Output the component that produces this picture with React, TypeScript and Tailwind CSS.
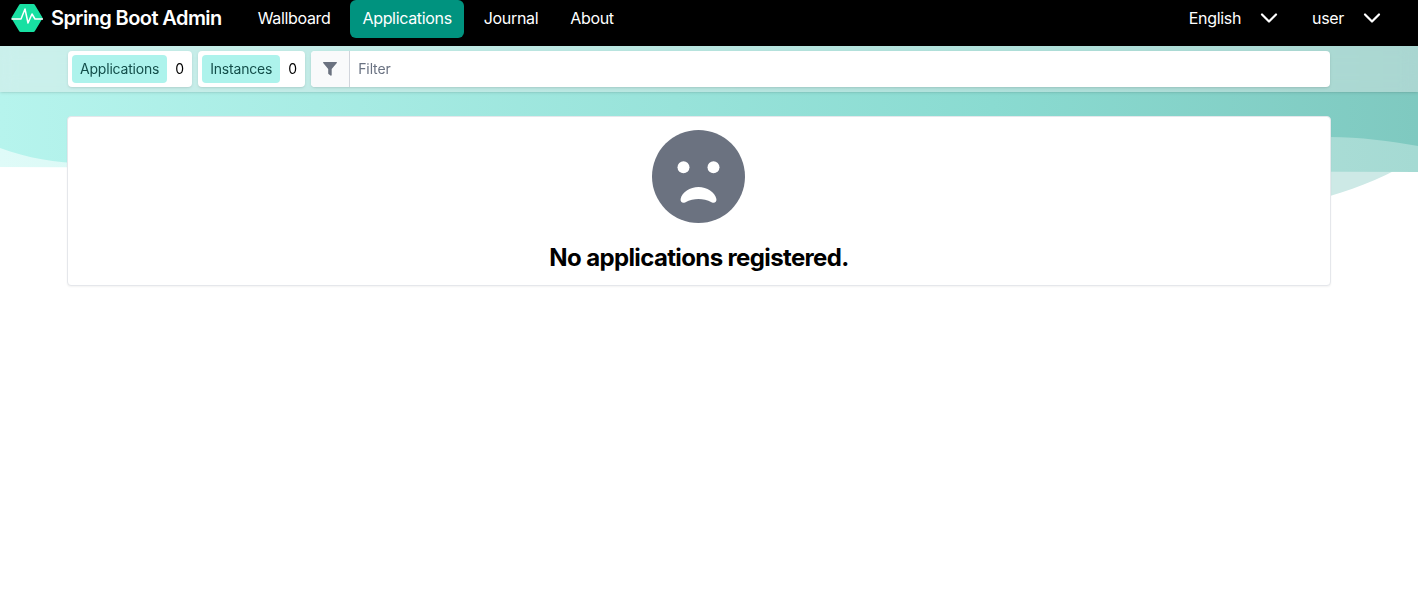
import { ChevronDown } from "lucide-react"

const links = ["Wallboard", "Applications", "Journal", "About"]

function Logo() {
    return (
        <svg viewBox="0 0 32 28" className="w-[32px] h-[28px]" fill="none">
            <path d="M9.5 1.5h13l7.5 12.5-7.5 12.5h-13L2 14z" fill="#18e0a2" stroke="#18e0a2" strokeWidth="3" strokeLinejoin="round" />
            <path d="M1 15h9l4-10 3 14 4-9 3 5h8" stroke="#fff" strokeWidth="1.5" strokeLinejoin="round" strokeLinecap="round" />
        </svg>
    )
}

function Waves() {
    return (
        <svg className="absolute left-0 top-[46px] w-[1418px] h-[160px]" viewBox="0 46 1418 160" fill="none">
            <defs>
                <linearGradient id="dark" x1="0" y1="0" x2="1" y2="0">
                    <stop offset="0" stopColor="#b6f4ed" />
                    <stop offset="0.7" stopColor="#8adbd1" />
                    <stop offset="1" stopColor="#7fc9c0" />
                </linearGradient>
                <linearGradient id="mid" x1="0" y1="0" x2="1" y2="0">
                    <stop offset="0" stopColor="#dffbf8" />
                    <stop offset="1" stopColor="#a5dad3" />
                </linearGradient>
            </defs>
            <path d="M1200 120H1418V157C1390 175 1360 187 1330 196L1200 210Z" fill="#cde9e6" />
            <path d="M0 46H1418V172L0 167Z" fill="url(#mid)" />
            <path d="M0 46H1418V146C1390 141 1360 137 1330 137H200C130 170 60 170 0 148Z" fill="url(#dark)" />
        </svg>
    )
}

function Face() {
    return (
        <svg viewBox="0 0 93 93" className="w-[93px] h-[93px] mr-px">
            <circle cx="46.5" cy="46.5" r="46.5" fill="#6b7280" />
            <circle cx="31.5" cy="37.2" r="6" fill="#fff" />
            <circle cx="61.5" cy="37.2" r="6" fill="#fff" />
            <path d="M28.6 69C30 62 38 57 46.5 57S63 62 64.4 69C64.9 72 62.4 73.4 60 72.4C55 70 51 69 46.5 69S38 70 33 72.4C30.6 73.4 28.1 72 28.6 69Z" fill="#fff" />
        </svg>
    )
}

function Counter({ label }: { label: string }) {
    return (
        <div className="flex items-center h-9 bg-white rounded shadow pl-1 py-1">
            <span className="h-7 px-2 flex items-center rounded bg-[#adf3ec] text-[#134e4a] text-sm tracking-[-0.2px]">{label}</span>
            <span className="w-[25px] pl-2 text-sm text-black">0</span>
        </div>
    )
}

export default function App() {
    return (
        <div className="relative min-h-[601px] bg-white overflow-hidden font-['Inter',sans-serif]">
            <Waves />
            <nav className="relative h-[46px] bg-black text-white flex items-start pl-[11px] pr-[32px]">
                <div className="flex items-center h-[36px] gap-2">
                    <Logo />
                    <span className="text-xl font-semibold tracking-[-0.58px]">Spring Boot Admin</span>
                </div>
                <ul className="flex gap-2 ml-6">
                    {links.map((l) => (
                        <li key={l} className={`h-[38px] pb-[2px] px-3 flex items-center rounded-md text-base tracking-[-0.33px] ${l === "Applications" ? "bg-[#00937f]" : ""}`}>{l}</li>
                    ))}
                </ul>
                <div className="ml-auto flex gap-[29px]">
                    <div className="h-[36px] flex items-center gap-[14px] text-base tracking-[-0.33px]">English <ChevronDown className="w-7 h-7" strokeWidth={1.9} /></div>
                    <div className="h-[36px] flex items-center gap-[14px] text-base tracking-[-0.33px]">user <ChevronDown className="w-7 h-7" strokeWidth={1.9} /></div>
                </div>
            </nav>
            <div className="relative h-[46px] bg-[#ececec]/40 backdrop-blur shadow flex items-start pt-[5px] pl-[68px] pr-[88px] gap-[6px]">
                <Counter label="Applications" />
                <Counter label="Instances" />
                <div className="flex-1 flex h-9 bg-white rounded shadow overflow-hidden">
                    <div className="w-[39px] flex items-center justify-center bg-[#f9fafb] border-r border-gray-300">
                        <svg viewBox="0 0 14 14" className="w-[14px] h-[14px]"><path d="M.6 0h12.8c.5 0 .8.6.4 1L8.7 7v6c0 .7-.7 1-1.2.6l-2-1.5c-.2-.2-.3-.4-.3-.6V7L.2 1C-.2.6.1 0 .6 0z" fill="#6b7280" /></svg>
                    </div>
                    <div className="flex-1 flex items-center pl-2 text-sm text-gray-500 tracking-[-0.1px]">Filter</div>
                </div>
            </div>
            <div className="relative mt-[24px] ml-[67px] w-[1264px] h-[170px] bg-white border border-gray-200 rounded shadow-[0_1px_2px_rgba(0,0,0,0.05)] flex flex-col items-center pt-[13px]">
                <Face />
                <h1 className="mt-[19px] text-2xl font-bold text-black tracking-[-0.63px]">No applications registered.</h1>
            </div>
        </div>
    )
}
